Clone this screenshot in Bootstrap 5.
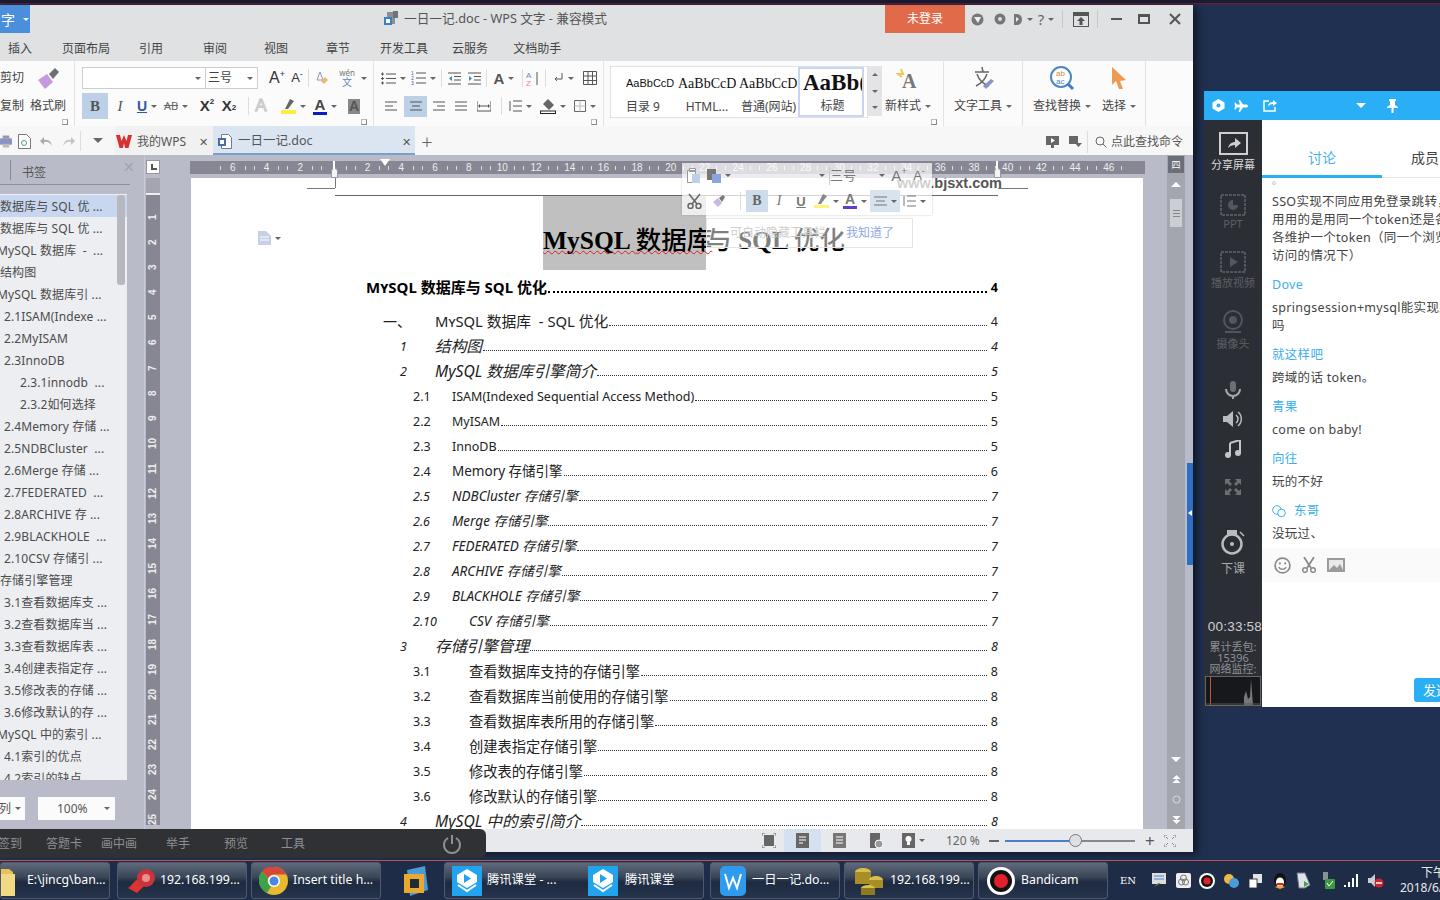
<!DOCTYPE html>
<html lang="zh-CN">
<head>
<meta charset="utf-8">
<title>一日一记.doc - WPS 文字</title>
<link href="https://cdn.jsdelivr.net/npm/bootstrap@5.3.0/dist/css/bootstrap.min.css" rel="stylesheet">
<style>
html,body{height:100%;margin:0}
body{width:1440px;height:900px;overflow:hidden;position:relative;background:#1f3050;font-family:"Noto Sans","Noto Sans CJK SC",sans-serif;font-size:12px;color:#444}
.topstrip{height:5px;background:linear-gradient(#1b1c33 0,#1b1c33 55%,#6a2438 55%,#3a2440 100%)}
.win{position:absolute;left:0;top:5px;width:1193px;height:847px;background:#e0e1e3;box-shadow:4px 2px 8px rgba(0,0,0,.55);overflow:hidden}
.titlerow{height:28px;position:relative}
.appbtn{width:30px;height:28px;background:#4a8fdc;color:#fff;font-size:14px}
.caret{width:0;height:0;border-left:3px solid transparent;border-right:3px solid transparent;border-top:3px solid #666;display:inline-block;flex:none}
.caret-w{border-top-color:#fff}
.doctitle{margin-left:353px;width:502px;gap:5px;font-size:12.7px;color:#555}
.loginbtn{width:80px;height:28px;background:#e06a4a;color:#fff;font-size:12px}
.winctl{width:228px;height:28px;color:#666}
.cell{flex:none;display:flex;align-items:center;justify-content:center}
.menurow{height:28px;font-size:12px;color:#444;padding-top:4px}
.menurow span{flex:none;white-space:nowrap}
.mw1{margin-left:8px}.mw2{margin-left:30px}.mw3{margin-left:29px}.mw4{margin-left:40px}.mw5{margin-left:37px}.mw6{margin-left:38px}.mw7{margin-left:30px}.mw8{margin-left:24px}.mw9{margin-left:25px}
.ribbon{height:65px;background:#fbfbfb}
.ribgroup{height:65px;position:relative;border-right:1px solid #e3e3e3;flex:none;padding-top:5px}
.launch{position:absolute;right:6px;bottom:1px;width:6px;height:6px;border:1px solid #888;border-top-color:#bbb;border-left-color:#bbb}
.g1{width:75px}.g2{width:299px;padding-left:7px}.g3{width:230px;padding-left:4px}.g4{width:340px;padding-left:6px}.g6{width:79px}.g7{width:123px}
.riblbl{color:#444;font-size:12px;white-space:nowrap}
.r1{height:24px}.r2{height:28px;margin-top:2px}
.fontsel{width:176px;height:22px;border:1px solid #ccc;background:#fff;flex:none}
.fontsel .fa{width:123px;border-right:1px solid #ccc;height:20px;justify-content:flex-end;padding-right:4px}
.fontsel .fb{flex:1;height:20px;padding:0 4px 0 2px;justify-content:space-between;font-size:12px}
.tglyph{font-family:"Liberation Serif",serif;font-weight:700;font-size:14px;color:#555;line-height:1}
.act{background:#bcd0e8}
.vsep{width:1px;height:18px;background:#ddd;flex:none}
.galbox{width:258px;height:52px;border:1px solid #e2e2e2;background:#fff;flex:none}
.stylecell{height:50px;flex:none;flex-direction:column}
.stylecell .smp{height:29px;display:flex;align-items:center;white-space:nowrap;overflow:hidden;color:#111;justify-content:flex-start;width:100%}
.sc1{width:63px;padding-left:15px;align-items:flex-start}.sc2{width:62px;padding-left:4px}.sc3{width:62px;padding-left:3px}.sc4{width:66px;padding-left:3px;border:2px solid #c7d6ee}
.smp-s{font-size:11px;font-family:"Liberation Sans",sans-serif}
.smp-m{font-size:14px;font-family:"Liberation Serif",serif}
.smp-b{font-size:23px;font-weight:700;font-family:"Liberation Serif",serif;color:#000}
.galscroll{width:14px;height:50px;background:#e4e4e6;flex-direction:column}
.galscroll i{flex:1;display:flex;align-items:center;justify-content:center}
.tabrow{height:29px;background:#f7f7f7;flex:none}
.tabrow>.cell{height:29px;padding-top:2px}
.tab1{width:98px;background:#f1f1f1;gap:5px;color:#555;font-size:12px;justify-content:flex-start;padding-left:1px}
.tabrow>.tab2{width:202px;background:#dbe4f1;border-bottom:2px solid #7e9fc6;font-size:12.5px;color:#555;gap:6px;justify-content:flex-start;padding-left:5px;padding-top:3px}
.xmark{color:#555;font-size:11px;line-height:1}
.tabrow>.findcmd{width:106px;height:22px;border-left:1px solid #ddd;gap:4px;font-size:12px;color:#555;justify-content:flex-start;padding-left:7px;padding-top:0;margin-top:2px}
.work{height:674px;background:#b9bcc8}
.navpanel{width:145px;flex:none;height:674px;border-right:1px solid #c9cbd4}
.navhead{height:39px;position:relative;font-size:12px;color:#555}
.navline{position:absolute;left:0;width:130px;top:29px;height:1px;background:#8e92a0}
.navsep{width:1px;height:20px;background:#888;margin:5px 11px 0 10px}
.navx{position:absolute;left:123px;top:1px;color:#a1a3ac;font-size:14px}
.navlist{width:127px;height:586px;background:#eceef2;position:relative;overflow:hidden;padding-top:1px}
.navlist li{height:22px;line-height:24px;list-style:none;white-space:nowrap;font-size:12px;letter-spacing:.1px;color:#4c4c4c}
.navlist ul{margin:0;padding:0}
.lv1{padding-left:0}.lv1m{margin-left:-3px}.lv2{padding-left:4px}.lv3{padding-left:20px}
.navlist .cur{background:#c9d6ef}
.navthumb{position:absolute;left:117px;top:1px;width:8px;height:90px;background:#b6b8bf;border-radius:3px}
.navfoot{height:49px;padding-top:17px;gap:13px}
.selx{height:23px;background:#fbfbfb;color:#555}
.s1{width:25px;justify-content:flex-end;padding-right:4px;gap:4px}
.s2{width:77px;justify-content:space-between;padding:0 5px 0 19px}
.center{width:1000px;flex:none}
.hrow{height:23px;position:relative}
.lbox{width:14px;height:14px;background:#fff;border:1px solid #999;margin:5px 0 0 1px;flex:none;position:relative}
.lbox::after{content:"";position:absolute;left:4px;top:3px;width:6px;height:6px;border-left:2px solid #555;border-bottom:2px solid #555}
.hrul{margin:6px 0 0 30px;width:955px;height:13px;background:#868792;color:#eee;font-size:10px;line-height:13px;padding-left:26px;overflow:hidden;font-family:"Liberation Sans",sans-serif}
.hrul span{flex:none;width:33.7px;text-align:center;position:relative}
.hrul span::before,.hrul span::after{content:"";position:absolute;top:5px;width:1px;height:4px;background:#ddd}
.hrul span::before{left:4px}.hrul span::after{right:4px}
.indent{position:absolute;width:0;height:0}
.ind1,.ind3{width:7px;height:10px;top:13px;background:#f4f4f4;border:1px solid #999;border-radius:3px 3px 0 0}
.ind1{left:186px}.ind3{left:849px}
.ind1::before,.ind3::before{content:"";position:absolute;left:1px;top:-8px;width:2px;height:8px;background:#fff}
.ind2{left:235px;top:4px;border-left:5px solid transparent;border-right:5px solid transparent;border-top:7px solid #fff}
.mainrow{height:651px}
.vrulcol{width:46px;flex:none;padding-left:1px}
.vrul{width:14px;height:647px;background:#868792;color:#eee;overflow:hidden;font-size:10px;font-family:"Liberation Sans",sans-serif;font-weight:700}
.vmargin{height:17px;background:#a4a5af;border-bottom:2px solid #eee;flex:none}
.vrul span{display:flex;height:25.1px;align-items:center;justify-content:center;writing-mode:vertical-rl;transform:rotate(180deg);flex:none;width:14px;line-height:14px;padding:0}
.vrul .vsp{height:10px;flex:none}
.paper{width:952px;height:651px;background:#fff;position:relative;overflow:hidden;flex:none;padding:17px 0 0 144px}
.inner{width:663px;border-top:1px solid #666}
.headrow{height:79px;padding-left:208px;font-family:"Liberation Serif","Noto Sans CJK SC",serif;font-size:25.5px;font-weight:700;color:#000;white-space:nowrap}
.sel{display:inline-block;height:74px;width:163px;background:#c0c0c0;line-height:89px;text-decoration:underline wavy #d22 1px;text-underline-offset:1px;text-decoration-skip-ink:none}
.headrest{line-height:89px}
.headcjk{font-weight:500;text-decoration:none}
.tocrow{height:25px;align-items:center;color:#222;font-size:14.25px;line-height:25px;white-space:nowrap}
.tnum{flex:none;font-size:12.5px}
.ldr{flex:1;height:0;border-bottom:1px dotted #333;margin:8px 2px 0 1px;align-self:center}
.pg{flex:none;width:9px;text-align:right;font-size:12.5px}
.tl0{margin-left:31px;font-weight:700;font-size:15px;margin-bottom:9px;color:#000}
.tl0 .ldr{border-bottom:2px dotted #000}
.sc{font-variant:small-caps}
.tl1{margin-left:48px;font-size:14.8px}.tl1 .tnum{width:52px;font-size:14px}
.tl2{margin-left:65px;font-style:italic;font-size:15.7px}.tl2 .tnum{width:35px}
.tl3{margin-left:78px}.tl3 .tnum{width:39px}
.tl3i{font-style:italic}
.tl3w .tnum{width:56px}
.t125{font-size:12.5px}
.t135{font-size:13.5px}
.crop{position:absolute;background:#777}
.cr1{left:144px;top:0;width:1px;height:10px}
.cr2{left:116px;top:10px;width:28px;height:1px}
.cr3{left:807px;top:10px;width:30px;height:1px}
.docic{position:absolute;left:67px;top:53px;gap:4px}
.wmark{position:absolute;left:706px;top:-3px;font:600 14.5px "Liberation Sans",sans-serif;color:#555}
.minibar{position:absolute;left:682px;top:158px;width:250px;height:52px;background:rgba(255,255,255,.72);box-shadow:0 0 2px rgba(120,120,120,.4);z-index:3;color:#777}
.mbr1{height:25px}.mbr2{height:26px}
.tipbox{position:absolute;left:706px;top:213px;width:207px;height:30px;background:rgba(255,255,255,.5);border:1px solid #e6e6e6;z-index:3;color:#cfcfcf;font-size:12px;padding-left:23px;line-height:28px;white-space:nowrap}
.tipbox b{font-weight:400;color:#8ea8df;margin-left:20px}
.sbar{width:18px;height:674px;margin-left:22px;background:#a3a5af;flex:none;flex-direction:column}
.sbtop{height:17px;width:16px;background:#6c6e78;color:#fff;font-size:9px;margin-top:1px}
.sbup{height:22px}
.sbthumb{width:12px;height:28px;background:#ccced6;margin-top:4px;flex-direction:column;gap:2px}
.sbthumb i{display:block;width:7px;height:1px;background:#888}
.sbfill{flex:1}
.sbbtn{height:20px}
.handle{position:absolute;left:1187px;top:308px;width:6px;height:102px;background:#2c6fc4;z-index:2}
.handle::after{content:"";position:absolute;left:1px;top:47px;border-top:3px solid transparent;border-bottom:3px solid transparent;border-right:4px solid #fff}
.statusbar{height:23px;background:#e8e9ec;font-size:12px;color:#666}
.stspace{width:754px;flex:none}
.st{width:37px;height:23px;flex:none}
.st.on{background:#d5e1f0}
.st0{width:30px}
.zoomlbl{width:38px;margin-left:14px;white-space:nowrap}
.zminus{width:10px;height:2px;background:#666;flex:none;margin-left:5px}
.zslider{width:130px;height:2px;background:#888;position:relative;margin:0 10px 0 6px;flex:none}
.zslider::before{content:"";position:absolute;left:0;top:0;width:65px;height:2px;background:#4a7fd0}
.zthumb{position:absolute;left:64px;top:-6px;width:13px;height:13px;border-radius:50%;background:#dedfe2;border:1px solid #777}
.zplus{font-size:17px;line-height:1;color:#555;width:14px;flex:none;margin-right:1px}
.overbar{position:absolute;left:0;top:829px;width:486px;height:29px;background:#2f3134;border-radius:0 6px 6px 0;color:#8d8f92;font-size:12px;z-index:5}
.overbar span{flex:none;white-space:nowrap}
.ob1{width:24px;margin-left:-2px}.ob2{width:40px;margin-left:24px}.ob3{width:36px;margin-left:15px}.ob4{width:24px;margin-left:29px}.ob5{width:24px;margin-left:34px}.ob6{width:24px;margin-left:33px}
.obpower{margin-left:137px;line-height:0}
.chat{position:absolute;left:1204px;top:91px;width:236px;height:616px;background:#fff;overflow:hidden;z-index:2}
.chhead{height:29px;background:#2aaef5}
.chbody{height:587px}
.side{width:58px;flex:none;background:#2b2e35;color:#5d6066;font-size:11px;text-align:center;height:587px}
.side div{white-space:nowrap}
.sd{display:flex;flex-direction:column;align-items:center;line-height:13px}
.sd1{margin-top:12px;color:#dcdcdc;gap:3px}
.sd2{margin-top:23px;gap:1px}
.sd3{margin-top:21px;gap:3px}
.sd4{margin-top:21px;gap:3px}
.sd5{margin-top:31px}
.sd6{margin-top:11px}
.sd7{margin-top:12px}
.sd8{margin-top:21px}
.sd9{margin-top:34px;color:#a9abae;font-size:12px;gap:7px}
.clock{margin-top:44px;color:#cfd0d2;font-size:13.5px;line-height:16px;text-align:right;margin-left:-2px;font-family:"Liberation Sans",sans-serif;letter-spacing:.2px}
.net{color:#8f9194;font-size:11px;line-height:11px;margin-top:6px}
.graph{width:56px;height:30px;border:1px solid #666;background:#17181b;margin:2px 0 0 1px}
.chmain{flex:1;min-width:0;overflow:hidden}
.chtabs{height:58px;border-bottom:1px solid #e3e3e3;position:relative}
.chtab{height:58px;padding-top:24px;font-size:14px;flex:none;line-height:28px;white-space:nowrap}
.chtab1{width:120px;text-align:center;color:#44b3ef;border-bottom:3px solid #2aaef5}
.chtab2{padding-left:29px}
.msgs{height:370px;padding-left:10px;font-size:12.5px;color:#444;white-space:nowrap;overflow:hidden;letter-spacing:.3px}
.msgs p{margin:0;line-height:18px}
.msgs .dotline{line-height:5px;height:5px;color:#999;font-size:10px;margin-bottom:10px;padding-top:0}
.msgs .who{color:#3bb0ec;margin-bottom:5px}
.msgblk{margin-bottom:11px}
.chtools{height:34px;background:#fafafa;padding-left:12px;gap:11px}
.chinput{height:125px;position:relative}
.sendbtn{position:absolute;left:152px;top:96px;width:40px;height:24px;background:#2aaef5;color:#fff;border-radius:3px;font-size:13px;padding-left:9px;line-height:24px;white-space:nowrap}
.taskbar{position:absolute;left:0;top:860px;width:1440px;height:40px;background:#1e2c47;border-top:1px solid #b3565c;padding-top:1px;color:#fff;font-size:12.3px}
.tbtn{height:37px;flex:none;background:linear-gradient(#5f6b7b 0,#3a4658 40%,#1d2a40 55%,#26344c 100%);border:1px solid #4e5a6c;border-radius:3px;white-space:nowrap;overflow:hidden;gap:6px;padding-left:7px;line-height:1}
.tb1{width:110px;padding-left:0;gap:8px;margin-right:7px}.tb2{width:130px;margin-right:4px;gap:4px;padding-left:10px}.tb3{width:130px;margin-right:4px;gap:4px}.tb4{width:55px;margin-right:4px;background:none;border:0}.tb5{width:260px;margin-right:6px}.tb6{width:130px;margin-right:4px;padding-left:9px}.tb7{width:130px;margin-right:4px;padding-left:9px}.tb8{width:130px;margin-right:4px;padding-left:7px;gap:5px}
.tencent{width:130px;gap:5px;flex:none}
.tencent2{gap:7px}
.squareic{flex:none}
.tray{margin-left:4px;height:37px;width:272px;font-size:10px}
.tray .tr{flex:none;width:24.1px;display:flex;justify-content:center;align-items:center}
.tray .tr0{margin-right:7px;font-family:"DejaVu Serif",serif}
.clockbox{margin-left:12px;width:60px;height:37px;line-height:15px;font-size:12px;padding-top:3px;white-space:nowrap;color:#e8e8e8}
.clockbox div:first-child{padding-left:21px}
</style>
</head>
<body>
<div class="topstrip"></div>

<main class="win">
  <!-- title bar -->
  <div class="titlerow d-flex align-items-center">
    <div class="appbtn cell gap-2"><span>字</span><span class="caret caret-w"></span></div>
    <div class="doctitle d-flex align-items-center">
      <svg width="16" height="15" viewBox="0 0 16 15"><rect x="4" y="1" width="8" height="12" fill="#8b8f96"/><rect x="10" y="0" width="5" height="7" fill="#6f737a"/><rect x="1" y="6" width="8" height="8" fill="#3b7fc9"/><rect x="3" y="8" width="4" height="4" fill="#fff"/></svg>
      <span>一日一记.doc - WPS 文字 - 兼容模式</span>
    </div>
    <div class="loginbtn cell">未登录</div>
    <div class="winctl d-flex align-items-center">
      <span class="cell" style="width:24px"><svg width="13" height="13" viewBox="0 0 13 13"><circle cx="6.500" cy="6.500" r="6" fill="#777"/><path d="M3 4l7 0-3 6z" fill="#eee"/></svg></span>
      <span class="cell" style="width:22px"><svg width="12" height="12" viewBox="0 0 12 12"><circle cx="6" cy="6" r="5.500" fill="#777"/><circle cx="6" cy="6" r="2" fill="#ddd"/></svg></span>
      <span class="cell gap-1" style="width:24px"><svg width="10" height="13" viewBox="0 0 10 13"><path d="M1 1h3a5 5.500 0 010 11H1z" fill="#777"/><path d="M3 4l3 2-3 3z" fill="#eee"/></svg><i class="caret"></i></span>
      <span class="cell gap-1" style="width:22px;font-size:15px">?<i class="caret"></i></span>
      <span style="width:1px;height:18px;background:#c8c8c8;margin:0 10px 0 5px"></span>
      <span class="cell" style="width:16px"><svg width="16" height="15" viewBox="0 0 16 15"><rect x=".5" y=".5" width="15" height="14" fill="none" stroke="#555"/><rect x="1" y="1" width="14" height="3" fill="#555"/><path d="M8 5l4 4h-2.500v4h-3V9H4z" fill="#555"/></svg></span>
      <span style="width:1px;height:18px;background:#c8c8c8;margin:0 12px 0 8px"></span>
      <span class="cell" style="width:12px"><span style="display:block;width:11px;height:2px;background:#555"></span></span>
      <span class="cell" style="width:13px;margin-left:15px"><span style="display:block;width:12px;height:10px;border:2px solid #555;border-top-width:3px"></span></span>
      <span class="cell" style="width:12px;margin-left:19px"><svg width="12" height="12" viewBox="0 0 12 12"><path d="M1 1l10 10M11 1L1 11" stroke="#555" stroke-width="2"/></svg></span>
    </div>
  </div>
  <!-- menu tabs -->
  <nav class="menurow d-flex align-items-center">
    <span class="mw1">插入</span><span class="mw2">页面布局</span><span class="mw3">引用</span><span class="mw4">审阅</span><span class="mw5">视图</span><span class="mw6">章节</span><span class="mw7">开发工具</span><span class="mw8">云服务</span><span class="mw9">文档助手</span>
  </nav>
  <!-- ribbon -->
  <section class="ribbon d-flex">
    <div class="ribgroup g1 d-flex">
      <div class="d-flex flex-column" style="width:29px">
        <div class="r1 d-flex align-items-center riblbl">剪切</div>
        <div class="r2 d-flex align-items-center riblbl">复制</div>
      </div>
      <div class="d-flex flex-column align-items-center" style="width:38px">
        <div class="r1 cell"><svg width="26" height="24" viewBox="0 0 26 24"><path d="M3 14l9-6 6 8-8 7z" fill="#c39be0"/><path d="M14 8l6-6 4 4-6 7z" fill="#6f6f73"/></svg></div>
        <div class="r2 d-flex align-items-center riblbl">格式刷</div>
      </div>
      <i class="launch"></i>
    </div>
    <div class="ribgroup g2">
      <div class="r1 d-flex align-items-center">
        <div class="fontsel d-flex align-items-center">
          <div class="fa d-flex align-items-center"><i class="caret"></i></div>
          <div class="fb d-flex align-items-center"><span>三号</span><i class="caret"></i></div>
        </div>
        <span class="cell" style="width:26px;margin-left:6px;font-size:16px;color:#333;font-family:'Liberation Sans'">A<sup style="font-size:9px">+</sup></span>
        <span class="cell" style="width:14px;font-size:13px;color:#333;font-family:'Liberation Sans'">A<sup style="font-size:9px">-</sup></span>
        <span class="vsep" style="margin:0 4px"></span>
        <span class="cell" style="width:18px"><svg width="14" height="15" viewBox="0 0 14 15"><path d="M5 1l3 8H2z" fill="none" stroke="#8a9ab0"/><path d="M6 10l4-4 3 3-4 4z" fill="#eeb676"/></svg></span>
        <span class="cell" style="width:28px;margin-left:2px;line-height:8px;font-size:8px;flex-direction:column;color:#777">wén<b style="color:#6c83c9;font-weight:400;font-size:10px;line-height:10px">文</b></span>
        <i class="caret"></i>
      </div>
      <div class="r2 d-flex align-items-center">
        <span class="cell act tglyph" style="width:26px;height:26px;font-size:15px">B</span>
        <span class="cell tglyph" style="width:24px;font-style:italic;font-weight:400;font-size:15px">I</span>
        <span class="cell gap-1" style="width:30px"><span class="tglyph" style="text-decoration:underline;color:#3455a5;font-family:'Liberation Sans'">U</span><i class="caret"></i></span>
        <span class="cell gap-1" style="width:28px;font-size:11px;color:#666"><s>AB</s><i class="caret"></i></span>
        <span class="cell" style="width:26px;margin-left:4px;font-size:15px;color:#333;font-family:'Liberation Sans';font-weight:700">X<sup style="font-size:8px">2</sup></span>
        <span class="cell" style="width:18px;font-size:15px;color:#333;font-family:'Liberation Sans';font-weight:700">X<sub style="font-size:8px">2</sub></span>
        <span class="vsep" style="margin:0 3px 0 10px"></span>
        <span class="cell" style="width:18px;font-size:17px;color:#fff;-webkit-text-stroke:1px #c3c3c3;font-family:'Liberation Sans'">A</span>
        <span class="cell gap-1" style="width:30px;margin-left:8px"><svg width="15" height="18" viewBox="0 0 15 18"><rect x="0" y="13" width="15" height="4" fill="#ffec3b"/><path d="M9 2l4 2-6 8-3 0z" fill="#666"/></svg><i class="caret"></i></span>
        <span class="cell gap-1" style="width:28px;margin-left:3px"><span class="d-inline-block text-center" style="font:700 15px/14px 'Liberation Sans';color:#444;border-bottom:3px solid #0a1cc6;width:14px">A</span><i class="caret"></i></span>
        <span class="cell" style="width:30px"><span class="cell" style="width:12px;height:15px;background:#888;color:#555;font:700 14px 'Liberation Sans'">A</span></span>
      </div>
      <i class="launch"></i>
    </div>
    <div class="ribgroup g3">
      <div class="r1 d-flex align-items-center">
        <span class="cell gap-1" style="width:30px"><svg width="15" height="13" viewBox="0 0 15 13"><path d="M5 2h10M5 6.500h10M5 11h10" stroke="#555"/><path d="M0 2h3M1.500.5v3M0 6.500h3M1.500 5v3M0 11h3M1.500 9.500v3" stroke="#555"/></svg><i class="caret"></i></span>
        <span class="cell gap-1" style="width:30px"><svg width="15" height="14" viewBox="0 0 15 14"><path d="M5 2h10M5 7h10M5 12h10" stroke="#555"/><text x="0" y="4" font-size="5" fill="#3f5aa8" font-family="Liberation Sans">1</text><text x="0" y="9" font-size="5" fill="#3f5aa8" font-family="Liberation Sans">2</text><text x="0" y="14" font-size="5" fill="#3f5aa8" font-family="Liberation Sans">3</text></svg><i class="caret"></i></span>
        <span class="vsep" style="margin:0 3px"></span>
        <span class="cell" style="width:18px"><svg width="13" height="13" viewBox="0 0 13 13"><path d="M0 1h13M6 4.500h7M6 8h7M0 12h13" stroke="#555"/><path d="M4 4v5L1 6.500z" fill="#3f87c5"/></svg></span>
        <span class="cell" style="width:22px"><svg width="13" height="13" viewBox="0 0 13 13"><path d="M0 1h13M6 4.500h7M6 8h7M0 12h13" stroke="#555"/><path d="M1 4v5l3-2.500z" fill="#3f87c5"/></svg></span>
        <span class="vsep" style="margin:0 3px 0 1px"></span>
        <span class="cell gap-1" style="width:28px"><span style="font:700 15px 'Liberation Sans';color:#555">A</span><i class="caret"></i></span>
        <span class="vsep" style="margin:0 3px 0 4px"></span>
        <span class="cell" style="width:14px"><svg width="14" height="15" viewBox="0 0 14 15"><text x="0" y="7" font-size="8" fill="#6b84c5" font-family="Liberation Sans">A</text><text x="0" y="15" font-size="8" fill="#e07f99" font-family="Liberation Sans">Z</text><path d="M11 1v13" stroke="#555"/></svg></span>
        <span class="vsep" style="margin:0 3px 0 5px"></span>
        <span class="cell gap-1" style="width:28px"><svg width="12" height="13" viewBox="0 0 12 13"><path d="M10 1v6H3M5 5L3 7l2 2" stroke="#555" fill="none"/></svg><i class="caret"></i></span>
        <span class="cell" style="width:26px"><svg width="14" height="14" viewBox="0 0 14 14"><path d="M.5.500h13v13H.5zM5 .5v13M9.500.5v13M.5 5h13M.5 9.500h13" fill="none" stroke="#555"/></svg></span>
      </div>
      <div class="r2 d-flex align-items-center">
        <span class="cell" style="width:26px"><svg width="12" height="11" viewBox="0 0 12 11"><path d="M0 1h12M0 5h8M0 9h12" stroke="#555"/></svg></span>
        <span class="cell act" style="width:23px;height:21px"><svg width="12" height="11" viewBox="0 0 12 11"><path d="M0 1h12M2 5h8M0 9h12" stroke="#555"/></svg></span>
        <span class="cell" style="width:24px"><svg width="12" height="11" viewBox="0 0 12 11"><path d="M0 1h12M4 5h8M0 9h12" stroke="#555"/></svg></span>
        <span class="cell" style="width:20px"><svg width="12" height="11" viewBox="0 0 12 11"><path d="M0 1h12M0 5h12M0 9h12" stroke="#555"/></svg></span>
        <span class="cell" style="width:26px"><svg width="14" height="12" viewBox="0 0 14 12"><path d="M0 1v10M14 1v10M0 11h14M3 6h8" stroke="#555" fill="none"/><path d="M3 4v4L1 6zM11 4v4l2-2z" fill="#555"/></svg></span>
        <span class="vsep" style="margin:0 4px 0 4px"></span>
        <span class="cell gap-1" style="width:28px"><svg width="14" height="12" viewBox="0 0 14 12"><path d="M5 1h9M5 6h9M5 11h9M2 1v10" stroke="#555" fill="none"/></svg><i class="caret"></i></span>
        <span class="cell gap-1" style="width:38px"><svg width="16" height="16" viewBox="0 0 16 16"><rect x=".5" y="13" width="15" height="2.500" fill="#fff" stroke="#222"/><path d="M8 1l6 6-5 5-6-6z" fill="#666"/></svg><i class="caret"></i></span>
        <span class="cell gap-1" style="width:26px"><svg width="12" height="12" viewBox="0 0 12 12"><path d="M.5.500h11v11H.5z" fill="none" stroke="#666"/><path d="M6 .5v11M.5 6h11" stroke="#bbb"/></svg><i class="caret"></i></span>
      </div>
      <i class="launch"></i>
    </div>
    <div class="ribgroup g4 d-flex">
      <div class="galbox d-flex">
        <div class="cell stylecell sc1"><span class="smp smp-s">AaBbCcD</span><span class="riblbl">目录 9</span></div>
        <div class="cell stylecell sc2"><span class="smp smp-m">AaBbCcD</span><span class="riblbl">HTML...</span></div>
        <div class="cell stylecell sc3"><span class="smp smp-m">AaBbCcD</span><span class="riblbl">普通(网站)</span></div>
        <div class="cell stylecell sc4"><span class="smp smp-b">AaBb(</span><span class="riblbl">标题</span></div>
      </div>
      <div class="cell galscroll"><i><span class="caret" style="transform:rotate(180deg)"></span></i><i><span class="caret"></span></i><i><span class="caret"></span></i></div>
      <div class="d-flex flex-column align-items-center" style="width:52px">
        <div class="r1 cell"><svg width="24" height="24" viewBox="0 0 24 24"><path d="M5 3l2 5-5 0 4 3" stroke="#f2c752" fill="none" stroke-width="2"/><text x="6" y="22" font-size="20" fill="#777" font-family="Liberation Serif" font-weight="700">A</text></svg></div>
        <div class="r2 d-flex align-items-center riblbl gap-1">新样式<i class="caret"></i></div>
      </div>
      <i class="launch"></i>
    </div>
    <div class="ribgroup g6 d-flex flex-column align-items-center">
      <div class="r1 cell"><svg width="24" height="24" viewBox="0 0 24 24"><path d="M4 6h14M11 1l1 5M6 8c2 6 6 10 12 12M16 8c-2 6-5 9-11 12" stroke="#666" fill="none" stroke-width="1.500"/><path d="M12 20l8-7 3 2-8 8z" fill="#8b94c9"/></svg></div>
      <div class="r2 d-flex align-items-center riblbl gap-1">文字工具<i class="caret"></i></div>
    </div>
    <div class="ribgroup g7 d-flex">
      <div class="d-flex flex-column align-items-center" style="width:78px">
        <div class="r1 cell"><svg width="26" height="26" viewBox="0 0 26 26"><circle cx="12" cy="12" r="10" fill="#fff" stroke="#4a86c5" stroke-width="2"/><text x="7" y="11" font-size="8" fill="#d98a3a" font-family="Liberation Sans">ab</text><text x="7" y="19" font-size="8" fill="#4a86c5" font-family="Liberation Sans">ac</text><path d="M19 19l5 5" stroke="#3c7dc4" stroke-width="3"/></svg></div>
        <div class="r2 d-flex align-items-center riblbl gap-1">查找替换<i class="caret"></i></div>
      </div>
      <div class="d-flex flex-column align-items-center" style="width:36px">
        <div class="r1 cell"><svg width="18" height="24" viewBox="0 0 18 24"><path d="M2 1l14 13-6 1 3 8-4 0-3-8-4 4z" fill="#ee9a55"/></svg></div>
        <div class="r2 d-flex align-items-center riblbl gap-1">选择<i class="caret"></i></div>
      </div>
    </div>
  </section>
  <!-- document tabs row -->
  <div class="tabrow d-flex align-items-center">
    <span class="cell" style="width:12px"><svg width="13" height="13" viewBox="0 0 13 13"><rect x="0" y="3" width="13" height="7" rx="1" fill="#8a94c4"/><rect x="3" y="0" width="7" height="3" fill="#999"/><rect x="3" y="9" width="7" height="4" fill="#bbb"/></svg></span>
    <span class="cell" style="width:24px"><svg width="13" height="15" viewBox="0 0 13 15"><path d="M.5.500h8l4 4v10H.5z" fill="#fff" stroke="#777"/><circle cx="6" cy="9" r="2.500" fill="none" stroke="#5a9a8a"/></svg></span>
    <span class="cell" style="width:20px"><svg width="13" height="11" viewBox="0 0 13 11"><path d="M12 10C11 5 8 3 4 4V1L0 5l4 4V6c4-1 6 1 8 4z" fill="#a9a9a9"/></svg></span>
    <span class="cell" style="width:24px"><svg width="13" height="11" viewBox="0 0 13 11"><path d="M1 10C2 5 5 3 9 4V1l4 4-4 4V6C5 5 3 7 1 10z" fill="#c3c3c3"/></svg></span>
    <span style="width:1px;height:20px;background:#ddd;margin:0 12px 0 0"></span>
    <span class="caret" style="border-left-width:5px;border-right-width:5px;border-top:5px solid #666;margin-right:12px"></span>
    <div class="cell tab1">
      <svg width="16" height="13" viewBox="0 0 16 13"><path d="M0 0h4l1.500 6L8 0l2.500 6L12 0h4l-3.500 13h-3.500L8 8l-1 5H3.500z" fill="#d6322f"/></svg>
      <span>我的WPS</span><span class="xmark" style="margin-left:8px">✕</span>
    </div>
    <div class="cell tab2">
      <svg width="14" height="15" viewBox="0 0 14 15"><path d="M3.500.5h7l3 3v11h-10z" fill="#fff" stroke="#6d7c96"/><rect x="0" y="4" width="8" height="8" fill="#4a6ca8"/><rect x="2" y="6" width="4" height="4" fill="#fff"/></svg>
      <span class="flex-grow-1">一日一记.doc</span><span class="xmark me-1">✕</span>
    </div>
    <span class="cell" style="width:24px;font-size:20px;font-weight:300;color:#666;line-height:1">+</span>
    <div style="width:607px"></div>
    <span class="cell" style="width:22px"><svg width="13" height="12" viewBox="0 0 13 12"><rect width="13" height="9" fill="#666"/><path d="M5 2l4 2.500L5 7z" fill="#fff"/><rect x="5" y="9" width="3" height="3" fill="#666"/></svg></span>
    <span class="cell" style="width:24px"><svg width="13" height="12" viewBox="0 0 13 12"><rect width="9" height="8" fill="#666"/><path d="M6 7h7l-3.500 4z" fill="#666"/></svg></span>
    <div class="cell findcmd"><svg width="12" height="12" viewBox="0 0 12 12"><circle cx="5" cy="5" r="4" fill="none" stroke="#666"/><path d="M8 8l3.500 3.500" stroke="#666"/></svg><span>点此查找命令</span></div>
  </div>

  <!-- workspace -->
  <div class="work d-flex position-relative">
    <aside class="navpanel">
      <div class="navhead d-flex align-items-start">
        <span class="navsep"></span><span style="margin-top:9px;margin-left:0">书签</span>
        <span class="navline"></span><span class="navx">✕</span>
      </div>
      <div class="navlist">
        <ul>
          <li class="lv1 cur">数据库与 SQL 优 ...</li>
          <li class="lv1">数据库与 SQL 优 ...</li>
          <li class="lv1"><span class="lv1m d-inline-block">MySQL 数据库&nbsp; -&nbsp; ...</span></li>
          <li class="lv1">结构图</li>
          <li class="lv1"><span class="lv1m d-inline-block">MySQL 数据库引 ...</span></li>
          <li class="lv2">2.1ISAM(Indexe ...</li>
          <li class="lv2">2.2MyISAM</li>
          <li class="lv2">2.3InnoDB</li>
          <li class="lv3">2.3.1innodb&nbsp; ...</li>
          <li class="lv3">2.3.2如何选择</li>
          <li class="lv2">2.4Memory 存储 ...</li>
          <li class="lv2">2.5NDBCluster&nbsp; ...</li>
          <li class="lv2">2.6Merge 存储 ...</li>
          <li class="lv2">2.7FEDERATED&nbsp; ...</li>
          <li class="lv2">2.8ARCHIVE 存 ...</li>
          <li class="lv2">2.9BLACKHOLE&nbsp; ...</li>
          <li class="lv2">2.10CSV 存储引 ...</li>
          <li class="lv1">存储引擎管理</li>
          <li class="lv2">3.1查看数据库支 ...</li>
          <li class="lv2">3.2查看数据库当 ...</li>
          <li class="lv2">3.3查看数据库表 ...</li>
          <li class="lv2">3.4创建表指定存 ...</li>
          <li class="lv2">3.5修改表的存储 ...</li>
          <li class="lv2">3.6修改默认的存 ...</li>
          <li class="lv1"><span class="lv1m d-inline-block">MySQL 中的索引 ...</span></li>
          <li class="lv2">4.1索引的优点</li>
          <li class="lv2">4.2索引的缺点</li>
        </ul>
        <div class="navthumb"></div>
      </div>
      <div class="navfoot d-flex">
        <div class="selx s1 d-flex align-items-center">列<i class="caret"></i></div>
        <div class="selx s2 d-flex align-items-center">100%<i class="caret"></i></div>
      </div>
    </aside>

    <div class="center">
      <div class="hrow d-flex">
        <div class="lbox"></div>
        <div class="hrul d-flex">
          <span>6</span><span>4</span><span>2</span><span></span><span>2</span><span>4</span><span>6</span><span>8</span><span>10</span><span>12</span><span>14</span><span>16</span><span>18</span><span>20</span><span>22</span><span>24</span><span>26</span><span>28</span><span>30</span><span>32</span><span>34</span><span>36</span><span>38</span><span>40</span><span>42</span><span>44</span><span>46</span>
        </div>
        <i class="indent ind1"></i>
        <i class="indent ind2"></i>
        <i class="indent ind3"></i>
      </div>
      <div class="mainrow d-flex">
        <div class="vrulcol">
          <div class="vrul d-flex flex-column">
            <div class="vmargin"></div>
            <div class="vsp"></div>
            <span>1</span><span>2</span><span>3</span><span>4</span><span>5</span><span>6</span><span>7</span><span>8</span><span>9</span><span>10</span><span>11</span><span>12</span><span>13</span><span>14</span><span>15</span><span>16</span><span>17</span><span>18</span><span>19</span><span>20</span><span>21</span><span>22</span><span>23</span><span>24</span><span>25</span>
          </div>
        </div>
        <article class="paper">
          <i class="crop cr1"></i><i class="crop cr2"></i><i class="crop cr3"></i>
          <div class="docic d-flex align-items-center"><svg width="13" height="14" viewBox="0 0 13 14"><path d="M0 0h8l5 5v9H0z" fill="#c7d0e6"/><path d="M2 6h9M2 9h9" stroke="#fff"/></svg><i class="caret"></i></div>
          <div class="wmark">www.bjsxt.com</div>
          <div class="inner">
            <div class="headrow"><span class="sel">MySQL <span class="headcjk">数据库</span></span><span class="headrest headcjk">与</span><span class="headrest"> SQL </span><span class="headrest headcjk">优化</span></div>
            <div class="tocrow tl0 d-flex"><span class="sc">MySQL 数据库与 SQL 优化</span><span class="ldr"></span><span class="pg">4</span></div>
            <div class="tocrow tl1 d-flex"><span class="tnum">一、</span><span class="sc">MySQL 数据库&nbsp; - SQL 优化</span><span class="ldr"></span><span class="pg">4</span></div>
            <div class="tocrow tl2 d-flex"><span class="tnum">1</span><span>结构图</span><span class="ldr"></span><span class="pg">4</span></div>
            <div class="tocrow tl2 d-flex"><span class="tnum">2</span><span>MySQL 数据库引擎简介</span><span class="ldr"></span><span class="pg">5</span></div>
            <div class="tocrow tl3 d-flex"><span class="tnum">2.1</span><span class="t125">ISAM(Indexed Sequential Access Method)</span><span class="ldr"></span><span class="pg">5</span></div>
            <div class="tocrow tl3 d-flex"><span class="tnum">2.2</span><span class="t125">MyISAM</span><span class="ldr"></span><span class="pg">5</span></div>
            <div class="tocrow tl3 d-flex"><span class="tnum">2.3</span><span class="t125">InnoDB</span><span class="ldr"></span><span class="pg">5</span></div>
            <div class="tocrow tl3 d-flex"><span class="tnum">2.4</span><span class="t135">Memory 存储引擎</span><span class="ldr"></span><span class="pg">6</span></div>
            <div class="tocrow tl3 tl3i d-flex"><span class="tnum">2.5</span><span class="t135">NDBCluster 存储引擎</span><span class="ldr"></span><span class="pg">7</span></div>
            <div class="tocrow tl3 tl3i d-flex"><span class="tnum">2.6</span><span class="t135">Merge 存储引擎</span><span class="ldr"></span><span class="pg">7</span></div>
            <div class="tocrow tl3 tl3i d-flex"><span class="tnum">2.7</span><span class="t135">FEDERATED 存储引擎</span><span class="ldr"></span><span class="pg">7</span></div>
            <div class="tocrow tl3 tl3i d-flex"><span class="tnum">2.8</span><span class="t135">ARCHIVE 存储引擎</span><span class="ldr"></span><span class="pg">7</span></div>
            <div class="tocrow tl3 tl3i d-flex"><span class="tnum">2.9</span><span class="t135">BLACKHOLE 存储引擎</span><span class="ldr"></span><span class="pg">7</span></div>
            <div class="tocrow tl3 tl3i tl3w d-flex"><span class="tnum">2.10</span><span class="t135">CSV 存储引擎</span><span class="ldr"></span><span class="pg">7</span></div>
            <div class="tocrow tl2 d-flex"><span class="tnum">3</span><span>存储引擎管理</span><span class="ldr"></span><span class="pg">8</span></div>
            <div class="tocrow tl3 tl3w d-flex"><span class="tnum">3.1</span><span>查看数据库支持的存储引擎</span><span class="ldr"></span><span class="pg">8</span></div>
            <div class="tocrow tl3 tl3w d-flex"><span class="tnum">3.2</span><span>查看数据库当前使用的存储引擎</span><span class="ldr"></span><span class="pg">8</span></div>
            <div class="tocrow tl3 tl3w d-flex"><span class="tnum">3.3</span><span>查看数据库表所用的存储引擎</span><span class="ldr"></span><span class="pg">8</span></div>
            <div class="tocrow tl3 tl3w d-flex"><span class="tnum">3.4</span><span>创建表指定存储引擎</span><span class="ldr"></span><span class="pg">8</span></div>
            <div class="tocrow tl3 tl3w d-flex"><span class="tnum">3.5</span><span>修改表的存储引擎</span><span class="ldr"></span><span class="pg">8</span></div>
            <div class="tocrow tl3 tl3w d-flex"><span class="tnum">3.6</span><span>修改默认的存储引擎</span><span class="ldr"></span><span class="pg">8</span></div>
            <div class="tocrow tl2 d-flex"><span class="tnum">4</span><span>MySQL 中的索引简介</span><span class="ldr"></span><span class="pg">8</span></div>
          </div>
        </article>
      </div>
    </div>

    <div class="sbar d-flex align-items-center">
      <div class="sbtop cell">四</div>
      <div class="sbup cell"><span class="caret caret-w" style="transform:rotate(180deg);border-left-width:5px;border-right-width:5px;border-top-width:5px"></span></div>
      <div class="sbthumb cell"><i></i><i></i><i></i></div>
      <div class="sbfill"></div>
      <div class="sbbtn cell"><span class="caret caret-w" style="border-left-width:5px;border-right-width:5px;border-top-width:5px"></span></div>
      <div class="sbbtn cell"><svg width="9" height="9" viewBox="0 0 9 9"><path d="M4.500 0l4 4H.5zM4.500 4l4 4H.5z" fill="#fff"/></svg></div>
      <div class="sbbtn cell"><svg width="9" height="9" viewBox="0 0 9 9"><circle cx="4.500" cy="4.500" r="3.500" fill="none" stroke="#ddd"/></svg></div>
      <div class="sbbtn cell"><svg width="9" height="9" viewBox="0 0 9 9"><path d="M.5 1h8l-4 4zM.5 5h8l-4 4z" fill="#fff"/></svg></div>
    </div>
    <div class="handle"></div>
  </div>

  <!-- status bar -->
  <footer class="statusbar d-flex align-items-center">
    <div class="stspace"></div>
    <span class="st st0 cell"><svg width="14" height="15" viewBox="0 0 14 15"><rect x="2" y="2" width="10" height="11" fill="#666"/><path d="M0 3V0h3M11 0h3v3M0 12v3h3M11 15h3v-3" fill="none" stroke="#666"/></svg></span>
    <span class="st on cell"><svg width="13" height="15" viewBox="0 0 13 15"><rect width="13" height="15" fill="#666"/><path d="M3 4h7M3 7h7M3 10h4" stroke="#fff"/></svg></span>
    <span class="st cell"><svg width="13" height="15" viewBox="0 0 13 15"><rect width="13" height="15" fill="#777"/><path d="M3 4h7M3 7h7M3 10h7" stroke="#fff"/></svg></span>
    <span class="st cell"><svg width="13" height="15" viewBox="0 0 13 15"><rect width="10" height="15" fill="#666"/><circle cx="9" cy="11" r="4" fill="#999" stroke="#fff"/></svg></span>
    <span class="st cell gap-1"><svg width="13" height="15" viewBox="0 0 13 15"><rect width="13" height="15" fill="#666"/><circle cx="6.500" cy="6" r="3" fill="#fff"/><rect x="5" y="9" width="3" height="3" fill="#fff"/></svg><i class="caret"></i></span>
    <span class="zoomlbl">120 %</span>
    <span class="zminus"></span>
    <div class="zslider"><i class="zthumb"></i></div>
    <span class="zplus">+</span>
    <svg class="ms-1" width="12" height="12" viewBox="0 0 12 12"><path d="M0 3V0h3M9 0h3v3M0 9v3h3M12 9v3H9M4 4L2 2M8 4l2-2M4 8l-2 2M8 8l2 2" fill="none" stroke="#888"/></svg>
  </footer>

  <!-- floating mini toolbar + hint -->
  <div class="minibar">
    <div class="mbr1 d-flex align-items-center">
      <span class="cell" style="width:23px"><svg width="14" height="15" viewBox="0 0 14 15"><path d="M2.500.5h6v3h-6zM.5 2.500v12h8v-12z" fill="#fff" stroke="#999"/><rect x="5" y="6" width="8" height="9" fill="#bdd0ea"/></svg></span>
      <span class="cell gap-1" style="width:28px"><svg width="14" height="15" viewBox="0 0 14 15"><rect y="1" width="9" height="11" fill="#777"/><rect x="5" y="6" width="9" height="9" fill="#8aa4dc"/></svg><i class="caret"></i></span>
      <span class="d-flex justify-content-end pe-1" style="width:96px"><i class="caret"></i></span>
      <span style="width:1px;height:18px;background:#ccc"></span>
      <span class="d-flex align-items-center justify-content-between pe-1" style="width:59px;font-size:13px">三号<i class="caret"></i></span>
      <span class="cell" style="width:20px;font:15px 'Liberation Sans'">A<sup style="font-size:9px">+</sup></span>
      <span class="cell" style="width:20px;font:13px 'Liberation Sans'">A<sup style="font-size:9px">-</sup></span>
    </div>
    <div class="mbr2 d-flex align-items-center">
      <span class="cell" style="width:24px"><svg width="15" height="16" viewBox="0 0 15 16"><circle cx="3.500" cy="13" r="2.500" fill="none" stroke="#666" stroke-width="1.500"/><circle cx="11.500" cy="13" r="2.500" fill="none" stroke="#666" stroke-width="1.500"/><path d="M2 1l8 10M13 1L5 11" stroke="#666" stroke-width="1.500"/></svg></span>
      <span class="cell" style="width:25px"><svg width="14" height="14" viewBox="0 0 14 14"><path d="M1 8l5-4 4 5-4 4z" fill="#c9b6e4"/><path d="M7 4l4-3 2 2-3 5z" fill="#777"/></svg></span>
      <span style="width:1px;height:18px;background:#ddd;margin:0 5px 0 9px"></span>
      <span class="cell act tglyph" style="width:22px;height:22px;background:#cfdcec;font-size:14px;color:#666">B</span>
      <span class="cell tglyph" style="width:22px;font-style:italic;font-weight:400;color:#777">I</span>
      <span class="cell tglyph" style="width:22px;text-decoration:underline;font-family:'Liberation Sans';font-size:13px;color:#777">U</span>
      <span class="cell gap-1" style="width:28px"><svg width="15" height="16" viewBox="0 0 15 16"><rect y="12" width="15" height="3" fill="#fff47a"/><path d="M9 1l4 2-6 8H4z" fill="#888"/></svg><i class="caret"></i></span>
      <span class="cell gap-1" style="width:30px"><span style="font:700 14px/13px 'Liberation Sans';border-bottom:3px solid #5b40cf;width:14px;text-align:center">A</span><i class="caret"></i></span>
      <span class="cell gap-1" style="width:30px;height:22px;background:#d8e3f0"><svg width="13" height="11" viewBox="0 0 13 11"><path d="M0 1h13M2 5h9M0 9h13" stroke="#777"/></svg><i class="caret"></i></span>
      <span class="cell gap-1" style="width:28px"><svg width="14" height="12" viewBox="0 0 14 12"><path d="M5 1h9M5 6h9M5 11h9M2 1v10" stroke="#777" fill="none"/></svg><i class="caret"></i></span>
    </div>
  </div>
  <div class="tipbox">可自动隐藏工具栏<b>我知道了</b></div>
</main>

<!-- classroom bottom bar -->
<div class="overbar d-flex align-items-center">
  <span class="ob1">签到</span><span class="ob2">答题卡</span><span class="ob3">画中画</span><span class="ob4">举手</span><span class="ob5">预览</span><span class="ob6">工具</span>
  <span class="obpower"><svg width="20" height="20" viewBox="0 0 20 20"><path d="M6 4a8 8 0 108 0" fill="none" stroke="#8d8f92" stroke-width="2"/><path d="M10 1v9" stroke="#8d8f92" stroke-width="2"/></svg></span>
</div>

<!-- live classroom panel -->
<section class="chat">
  <div class="chhead d-flex align-items-center">
    <span class="cell" style="width:14px;margin-left:7px"><svg width="13" height="13" viewBox="0 0 13 13"><path d="M6.500 0l6 3.500v6l-6 3.500-6-3.500v-6z" fill="#fff"/><circle cx="6.500" cy="6.500" r="2" fill="#2aaef5"/></svg></span>
    <span class="cell" style="width:15px;margin-left:8px"><svg width="14" height="14" viewBox="0 0 14 14"><path d="M14 7c0-1-1-1.500-2-1.500H9L6 1H4.500L6 5.500H3L1.500 3.500H.5L1 7 .5 10.500h1L3 8.500h3L4.500 13H6l3-4.500h3c1 0 2-.5 2-1.500z" fill="#fff"/></svg></span>
    <span class="cell" style="width:14px;margin-left:15px"><svg width="14" height="13" viewBox="0 0 14 13"><path d="M6 2H1v10h11V8" fill="none" stroke="#fff" stroke-width="1.500"/><path d="M5 8c0-3 2-5 5-5V1l4 3-4 3V5C8 5 6 6 5 8z" fill="#fff"/></svg></span>
    <span class="caret caret-w" style="margin-left:79px;border-left-width:5px;border-right-width:5px;border-top-width:5px"></span>
    <span class="cell" style="margin-left:20px;width:12px"><svg width="11" height="14" viewBox="0 0 11 14"><path d="M2 0h7v2H8v4l3 2v1H0V8l3-2V2H2z" fill="#fff"/><rect x="4.500" y="9" width="2" height="5" fill="#fff"/></svg></span>
  </div>
  <div class="chbody d-flex">
    <div class="side">
      <div class="sd sd1"><svg width="29" height="23" viewBox="0 0 29 23"><rect x="1" y="1" width="27" height="21" fill="none" stroke="#cfcfcf" stroke-width="2"/><path d="M9 16c1-4 4-6 7-6V6l6 5-6 5v-3c-3 0-5 1-7 3z" fill="#cfcfcf"/></svg><div>分享屏幕</div></div>
      <div class="sd sd2"><svg width="26" height="22" viewBox="0 0 26 22"><rect x="1" y="1" width="24" height="20" fill="none" stroke="#53565c" stroke-width="2" stroke-dasharray="3 1"/><path d="M13 6a5 5 0 105 5h-5z" fill="#53565c"/></svg><div>PPT</div></div>
      <div class="sd sd3"><svg width="26" height="22" viewBox="0 0 26 22"><rect x="1" y="1" width="24" height="20" fill="none" stroke="#53565c" stroke-width="2" stroke-dasharray="3 1"/><path d="M10 6l8 5-8 5z" fill="#53565c"/></svg><div>播放视频</div></div>
      <div class="sd sd4"><svg width="22" height="24" viewBox="0 0 22 24"><circle cx="11" cy="10" r="9" fill="none" stroke="#53565c" stroke-width="2"/><circle cx="11" cy="10" r="4" fill="#53565c"/><path d="M3 22h16" stroke="#53565c" stroke-width="2"/></svg><div>摄像头</div></div>
      <div class="sd sd5"><svg width="16" height="18" viewBox="0 0 16 18"><rect x="5" y="0" width="6" height="11" rx="3" fill="#6c6f74"/><path d="M1 8a7 7 0 0014 0M8 15v3" fill="none" stroke="#a9abae" stroke-width="2"/></svg></div>
      <div class="sd sd6"><svg width="20" height="18" viewBox="0 0 20 18"><path d="M0 6h4l6-5v16l-6-5H0z" fill="#b9bbbe"/><path d="M13 5a5 5 0 010 8M15 2a9 9 0 010 14" fill="none" stroke="#b9bbbe" stroke-width="1.500"/></svg></div>
      <div class="sd sd7"><svg width="16" height="18" viewBox="0 0 16 18"><path d="M5 3l10-3v13" fill="none" stroke="#c4c5c8" stroke-width="2"/><path d="M5 3v12" stroke="#c4c5c8" stroke-width="2"/><circle cx="3" cy="15" r="3" fill="#c4c5c8"/><circle cx="13" cy="13" r="3" fill="#c4c5c8"/></svg></div>
      <div class="sd sd8"><svg width="16" height="16" viewBox="0 0 16 16"><path d="M0 0h6L4 2l3 3-2 2-3-3-2 2zM16 0v6l-2-2-3 3-2-2 3-3-2-2zM0 16v-6l2 2 3-3 2 2-3 3 2 2zM16 16h-6l2-2-3-3 2-2 3 3 2-2z" fill="#6c6f74"/></svg></div>
      <div class="sd sd9"><svg width="24" height="26" viewBox="0 0 24 26"><circle cx="11" cy="15" r="9.500" fill="none" stroke="#b9bbbe" stroke-width="2.500"/><circle cx="11" cy="15" r="2" fill="#b9bbbe"/><rect x="6" y="1" width="10" height="5" fill="#b9bbbe"/><path d="M19 3l4 4" stroke="#b9bbbe" stroke-width="1.500"/></svg><div>下课</div></div>
      <div class="clock">00:33:58</div>
      <div class="net">累计丢包:<br>15396<br>网络监控:</div>
      <div class="graph"><svg width="54" height="28" viewBox="0 0 54 28"><rect x="4" y="0" width="1" height="28" fill="#c5543a"/><path d="M38 28V20l2-6 2 8 2-2 1-18 2 26z" fill="#77787a"/><path d="M0 27h54" stroke="#555"/></svg></div>
    </div>
    <div class="chmain">
      <div class="chtabs d-flex">
        <div class="chtab chtab1">讨论</div>
        <div class="chtab chtab2">成员</div>
      </div>
      <div class="msgs">
        <p class="dotline">。</p>
        <div class="msgblk">
          <p>SSO实现不同应用免登录跳转，</p>
          <p>用用的是用同一个token还是各个</p>
          <p>各维护一个token（同一个浏览器</p>
          <p>访问的情况下）</p>
        </div>
        <div class="msgblk"><p class="who">Dove</p><p>springsession+mysql能实现跨</p><p>吗</p></div>
        <div class="msgblk"><p class="who">就这样吧</p><p>跨域的话 token。</p></div>
        <div class="msgblk"><p class="who">青果</p><p>come on baby!</p></div>
        <div class="msgblk"><p class="who">向往</p><p>玩的不好</p></div>
        <div class="msgblk"><p class="who d-flex align-items-center gap-2"><svg width="14" height="13" viewBox="0 0 14 13"><circle cx="5" cy="5" r="4.300" fill="none" stroke="#3bb0ec"/><circle cx="9.500" cy="8" r="3.800" fill="#fff" stroke="#3bb0ec"/></svg>东哥</p><p>没玩过、</p></div>
      </div>
      <div class="chtools d-flex align-items-center">
        <svg width="17" height="17" viewBox="0 0 16 16"><circle cx="8" cy="8" r="7" fill="none" stroke="#8a8a8a" stroke-width="1.600"/><circle cx="5.500" cy="6" r="1" fill="#8a8a8a"/><circle cx="10.500" cy="6" r="1" fill="#8a8a8a"/><path d="M4.500 9.500a4 4 0 007 0" fill="none" stroke="#8a8a8a" stroke-width="1.300"/></svg>
        <svg width="14" height="16" viewBox="0 0 14 16"><circle cx="3" cy="13" r="2.300" fill="none" stroke="#8a8a8a" stroke-width="1.500"/><circle cx="11" cy="13" r="2.300" fill="none" stroke="#8a8a8a" stroke-width="1.500"/><path d="M2 0l7 11M12 0L5 11" stroke="#8a8a8a" stroke-width="1.800"/></svg>
        <svg width="18" height="14" viewBox="0 0 18 14"><rect width="18" height="14" fill="#9b9b9b"/><rect x="2" y="2" width="14" height="10" fill="#e9e9e9"/><path d="M2 12l5-5 3 3 3-4 3 6z" fill="#9b9b9b"/></svg>
      </div>
      <div class="chinput"><div class="sendbtn">发送</div></div>
    </div>
  </div>
</section>

<!-- windows taskbar -->
<footer class="taskbar d-flex">
  <div class="tbtn tb1 d-flex align-items-center">
    <svg class="squareic" width="18" height="30" viewBox="0 0 18 30"><path d="M0 3h8l4 3v24H0z" fill="#e6c25a"/><path d="M0 8h14v22H0z" fill="#f2d983"/></svg><span>E:\jincg\ban...</span>
  </div>
  <div class="tbtn tb2 d-flex align-items-center">
    <svg class="squareic" width="28" height="26" viewBox="0 0 28 26"><path d="M0 20C4 18 6 12 11 11L18 16 9 25z" fill="#d33"/><circle cx="18" cy="10" r="9" fill="#c9333a"/><circle cx="18" cy="10" r="4" fill="#f08b8f"/></svg><span>192.168.199...</span>
  </div>
  <div class="tbtn tb3 d-flex align-items-center">
    <svg class="squareic" width="30" height="30" viewBox="0 0 30 30"><circle cx="15" cy="15" r="14" fill="#e6b92f"/><path d="M15 1a14 14 0 0112.500 7.500H15a6.500 6.500 0 00-6 4L3 5A14 14 0 0115 1z" fill="#d8453a"/><path d="M3 5l6 7.500c-1 3 .5 6 3 8L8 27A14 14 0 013 5z" fill="#3fa24a"/><circle cx="15" cy="15" r="6" fill="#fff"/><circle cx="15" cy="15" r="4.500" fill="#4a86e6"/></svg><span>Insert title h...</span>
  </div>
  <div class="tbtn tb4 cell">
    <svg width="28" height="32" viewBox="0 0 28 32"><path d="M5 5l18-4 3 24-18 6z" fill="#4a9bd8"/><path d="M2 9h20v19H2z" fill="#e9a92d"/><rect x="8" y="14" width="9" height="9" fill="#1f2a3a"/></svg>
  </div>
  <div class="tbtn tb5 d-flex align-items-center">
    <div class="tencent d-flex align-items-center">
      <svg class="squareic" width="30" height="30" viewBox="0 0 30 30"><rect width="30" height="30" fill="#22a3ee"/><path d="M15 3l10 6v7l-10 6-10-6V9z" fill="#fff"/><path d="M12 8l7 4.500-7 4.500z" fill="#22a3ee"/><path d="M6 19l9 6 9-6" fill="none" stroke="#fff" stroke-width="2"/></svg>
      <span>腾讯课堂 - ...</span>
    </div>
    <div class="tencent tencent2 d-flex align-items-center">
      <svg class="squareic" width="30" height="30" viewBox="0 0 30 30"><rect width="30" height="30" fill="#22a3ee"/><path d="M15 3l10 6v7l-10 6-10-6V9z" fill="#fff"/><path d="M12 8l7 4.500-7 4.500z" fill="#22a3ee"/><path d="M6 19l9 6 9-6" fill="none" stroke="#fff" stroke-width="2"/></svg>
      <span>腾讯课堂</span>
    </div>
  </div>
  <div class="tbtn tb6 d-flex align-items-center">
    <svg class="squareic" width="26" height="30" viewBox="0 0 26 30"><rect width="26" height="30" rx="5" fill="#2e9bef"/><path d="M5 8l4 14 4-10 4 10 4-14" fill="none" stroke="#fff" stroke-width="2"/></svg><span>一日一记.do...</span>
  </div>
  <div class="tbtn tb7 d-flex align-items-center">
    <svg class="squareic" width="30" height="30" viewBox="0 0 30 30"><ellipse cx="9" cy="6" rx="8" ry="4" fill="#d9c04c"/><rect x="1" y="6" width="16" height="12" fill="#a88e25"/><ellipse cx="22" cy="14" rx="7" ry="4" fill="#d9c04c"/><rect x="15" y="14" width="14" height="8" fill="#a88e25"/><ellipse cx="14" cy="22" rx="7" ry="3" fill="#d9c04c"/><rect x="7" y="22" width="14" height="7" fill="#8f7a20"/></svg><span>192.168.199...</span>
  </div>
  <div class="tbtn tb8 d-flex align-items-center">
    <svg class="squareic" width="30" height="30" viewBox="0 0 30 30"><circle cx="15" cy="15" r="14" fill="#fff"/><circle cx="15" cy="15" r="11" fill="#111"/><circle cx="15" cy="15" r="7" fill="#e2202c"/></svg><span>Bandicam</span>
  </div>
  <div class="tray d-flex align-items-center">
    <span class="tr tr0">EN</span>
    <span class="tr"><svg width="15" height="15" viewBox="0 0 15 15"><rect width="14" height="11" fill="#ddd"/><path d="M2 3h10M2 6h10" stroke="#4a86c5"/><path d="M2 14l4-4h3z" fill="#6a8f4a"/></svg></span>
    <span class="tr"><svg width="15" height="15" viewBox="0 0 15 15"><rect width="15" height="15" rx="2" fill="#eee"/><circle cx="5.500" cy="9" r="3" fill="none" stroke="#777"/><circle cx="9.500" cy="9" r="3" fill="none" stroke="#777"/><circle cx="7.500" cy="5" r="3" fill="none" stroke="#777"/></svg></span>
    <span class="tr"><svg width="16" height="16" viewBox="0 0 16 16"><circle cx="8" cy="8" r="8" fill="#fff"/><circle cx="8" cy="8" r="6" fill="#111"/><circle cx="8" cy="8" r="3.500" fill="#e2202c"/></svg></span>
    <span class="tr"><svg width="16" height="16" viewBox="0 0 16 16"><circle cx="6" cy="6" r="5" fill="#f0b840"/><circle cx="11" cy="10" r="5" fill="#4a9bd8"/></svg></span>
    <span class="tr"><svg width="13" height="14" viewBox="0 0 13 14"><rect x="4" width="9" height="9" fill="#e4e4e4"/><rect y="5" width="8" height="9" fill="#fff" stroke="#444"/></svg></span>
    <span class="tr"><svg width="16" height="18" viewBox="0 0 16 18"><ellipse cx="8" cy="8" rx="6" ry="7" fill="#111"/><ellipse cx="8" cy="10" rx="4" ry="4.500" fill="#fff"/><path d="M3 15l5-2 5 2-5 2z" fill="#f3a83a"/><path d="M5 11h6v2H5z" fill="#d22"/></svg></span>
    <span class="tr"><svg width="15" height="17" viewBox="0 0 15 17"><path d="M1 1h8l5 12-5 3H3z" fill="#dfe4ea" stroke="#6a7a8a"/><path d="M8 9l5 3-5 3z" fill="#4aa34a"/></svg></span>
    <span class="tr"><svg width="15" height="17" viewBox="0 0 15 17"><rect x="3" y="0" width="5" height="8" fill="#8b8f96"/><rect x="5" y="7" width="10" height="10" rx="1" fill="#3e9a3e"/><path d="M7 11l2 3 4-5" stroke="#fff" fill="none"/></svg></span>
    <span class="tr"><svg width="15" height="13" viewBox="0 0 15 13"><path d="M0 11h2v2H0zM4 8h2v5H4zM8 4h2v9H8zM12 0h2v13h-2z" fill="#fff"/></svg></span>
    <span class="tr"><svg width="16" height="15" viewBox="0 0 16 15"><path d="M0 5h3l4-4v13l-4-4H0z" fill="#c9ced6"/><circle cx="11" cy="10" r="4.500" fill="#d1232a"/><path d="M8 10h6" stroke="#fff" stroke-width="1.500"/></svg></span>
  </div>
  <div class="clockbox"><div>下午</div><div>2018/6/20</div></div>
</footer>
<script src="https://cdn.jsdelivr.net/npm/bootstrap@5.3.0/dist/js/bootstrap.bundle.min.js"></script>
</body>
</html>
